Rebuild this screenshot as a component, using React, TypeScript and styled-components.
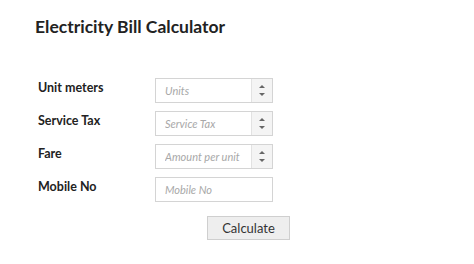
import React from 'react';
import styled, { createGlobalStyle } from 'styled-components';

const FONT = '"Lato", "Open Sans", Arial, sans-serif';

const GlobalStyle = createGlobalStyle`
  html, body {
    margin: 0;
    padding: 0;
    background: #ffffff;
  }
  body {
    font-family: ${FONT};
    color: #222;
  }
`;

const Page = styled.div`
  width: 474px;
  height: 264px;
  box-sizing: border-box;
  padding: 14px 0 0 35px;
`;

const Title = styled.h1`
  margin: 0;
  font-size: 17.5px;
  font-weight: 700;
  line-height: 26px;
  color: #222;
`;

const Form = styled.form`
  display: grid;
  grid-template-columns: 117px 118px;
  row-gap: 8px;
  margin: 38px 0 0 3px;
`;

const Label = styled.label`
  font-size: 12.5px;
  font-weight: 700;
  line-height: 16px;
  padding-top: 2px;
  color: #222;
`;

const Field = styled.div`
  display: flex;
  height: 25px;
  box-sizing: border-box;
  border: 1px solid #d4d4d4;
  background: #fff;
`;

const Input = styled.input`
  flex: 1;
  min-width: 0;
  border: none;
  outline: none;
  padding: 0 0 0 9px;
  font-family: ${FONT};
  font-size: 11px;
  color: #333;
  background: transparent;

  &::placeholder {
    color: #a8a8a8;
    font-style: italic;
  }
`;

const Spinner = styled.div`
  width: 20px;
  flex: none;
  display: flex;
  flex-direction: column;
  justify-content: center;
  align-items: center;
  gap: 5px;
  border-left: 1px solid #e2e2e2;
  background: #f4f4f4;
`;

const Arrow = styled.span<{ $down?: boolean }>`
  width: 0;
  height: 0;
  border-left: 3px solid transparent;
  border-right: 3px solid transparent;
  ${({ $down }) =>
    $down ? 'border-top: 3px solid #666;' : 'border-bottom: 3px solid #666;'}
`;

const Actions = styled.div`
  grid-column: 2;
  display: flex;
  justify-content: flex-end;
  margin-top: 6px;
`;

const Button = styled.button`
  width: 83px;
  height: 24px;
  margin-right: -17px;
  border: 1px solid #cfcfcf;
  background: #eeeeee;
  font-family: ${FONT};
  font-size: 13px;
  color: #333;
  padding: 0;
`;

type FieldRow = {
  label: string;
  placeholder: string;
  number: boolean;
};

const rows: FieldRow[] = [
  { label: 'Unit meters', placeholder: 'Units', number: true },
  { label: 'Service Tax', placeholder: 'Service Tax', number: true },
  { label: 'Fare', placeholder: 'Amount per unit', number: true },
  { label: 'Mobile No', placeholder: 'Mobile No', number: false },
];

export default function App() {
  return (
    <>
      <GlobalStyle />
      <Page>
        <Title>Electricity Bill Calculator</Title>
        <Form onSubmit={(e) => e.preventDefault()}>
          {rows.map((row) => (
            <React.Fragment key={row.label}>
              <Label>{row.label}</Label>
              <Field>
                <Input type="text" placeholder={row.placeholder} />
                {row.number && (
                  <Spinner>
                    <Arrow />
                    <Arrow $down />
                  </Spinner>
                )}
              </Field>
            </React.Fragment>
          ))}
          <Actions>
            <Button type="submit">Calculate</Button>
          </Actions>
        </Form>
      </Page>
    </>
  );
}
